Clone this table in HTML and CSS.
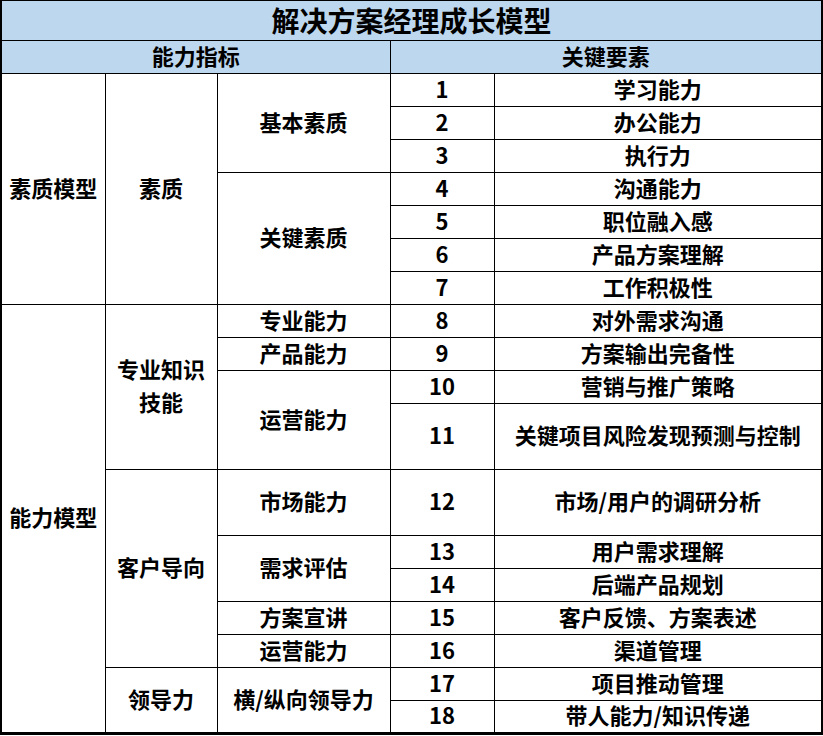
FILE: index.html
```html
<!DOCTYPE html>
<html lang="zh-CN">
<head>
<meta charset="utf-8">
<title>解决方案经理成长模型</title>
<link rel="stylesheet" href="styles.css">
</head>
<body>
<table class="sheet">
  <colgroup>
    <col class="c1"><col class="c2"><col class="c3"><col class="c4"><col class="c5">
  </colgroup>
  <tr class="r-title"><td class="head title" colspan="5">解决方案经理成长模型</td></tr>
  <tr class="r"><td class="head" colspan="3">能力指标</td><td class="head" colspan="2">关键要素</td></tr>
  <tr class="r">
    <td rowspan="7">素质模型</td>
    <td rowspan="7">素质</td>
    <td rowspan="3">基本素质</td>
    <td>1</td><td>学习能力</td>
  </tr>
  <tr class="r"><td>2</td><td>办公能力</td></tr>
  <tr class="r"><td>3</td><td>执行力</td></tr>
  <tr class="r"><td rowspan="4">关键素质</td><td>4</td><td>沟通能力</td></tr>
  <tr class="r"><td>5</td><td>职位融入感</td></tr>
  <tr class="r"><td>6</td><td>产品方案理解</td></tr>
  <tr class="r"><td>7</td><td>工作积极性</td></tr>
  <tr class="r">
    <td rowspan="11">能力模型</td>
    <td rowspan="4" class="two-line">专业知识<br>技能</td>
    <td>专业能力</td><td>8</td><td>对外需求沟通</td>
  </tr>
  <tr class="r"><td>产品能力</td><td>9</td><td>方案输出完备性</td></tr>
  <tr class="r"><td rowspan="2">运营能力</td><td>10</td><td>营销与推广策略</td></tr>
  <tr class="r2"><td>11</td><td>关键项目风险发现预测与控制</td></tr>
  <tr class="r2">
    <td rowspan="5">客户导向</td>
    <td>市场能力</td><td>12</td><td>市场/用户的调研分析</td>
  </tr>
  <tr class="r"><td rowspan="2">需求评估</td><td>13</td><td>用户需求理解</td></tr>
  <tr class="r"><td>14</td><td>后端产品规划</td></tr>
  <tr class="r"><td>方案宣讲</td><td>15</td><td>客户反馈、方案表述</td></tr>
  <tr class="r"><td>运营能力</td><td>16</td><td>渠道管理</td></tr>
  <tr class="r">
    <td rowspan="2">领导力</td>
    <td rowspan="2">横/纵向领导力</td>
    <td>17</td><td>项目推动管理</td>
  </tr>
  <tr class="r"><td>18</td><td>带人能力/知识传递</td></tr>
</table>
</body>
</html>
```
FILE: styles.css
```css
html, body {
  margin: 0;
  padding: 0;
  background: #ffffff;
}

.sheet {
  border-collapse: collapse;
  table-layout: fixed;
  width: 821px;
  font-family: "Noto Sans CJK SC", "Microsoft YaHei", sans-serif;
  font-weight: 700;
  font-size: 22px;
  color: #000000;
  border-top: 1px solid #000;
  border-left: 2px solid #000;
  border-right: 2px solid #000;
  border-bottom: 3px solid #000;
}

.c1 { width: 104px; }
.c2 { width: 112px; }
.c3 { width: 173px; }
.c4 { width: 104px; }
.c5 { width: 328px; }

.sheet td {
  border: 1px solid #000;
  text-align: center;
  vertical-align: middle;
  padding: 0 0 5px 0;
  line-height: 26px;
  white-space: nowrap;
}

.r-title { height: 40px; }
.r { height: 33px; }
.r2 { height: 66px; }

.head {
  background: #bdd7ee;
}

.sheet .title {
  font-size: 28px;
  line-height: 34px;
  padding: 0 0 2px 0;
}

.sheet .two-line {
  line-height: 33px;
}
```
